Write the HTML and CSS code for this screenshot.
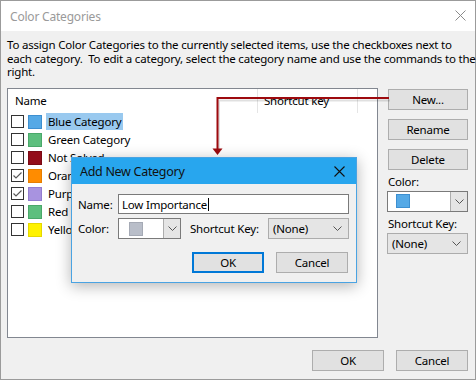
FILE: index.html
```html
<!DOCTYPE html>
<html>
<head>
<meta charset="utf-8">
<link rel="stylesheet" href="styles.css">
</head>
<body>
<div class="window">
  <div class="titlebar">
    <span class="title">Color Categories</span>
    <svg class="close" width="11" height="11" viewBox="0 0 11 11"><path d="M0.5 0.5 L10.5 10.5 M10.5 0.5 L0.5 10.5" stroke="#8a8a8a" stroke-width="1" fill="none"/></svg>
  </div>
  <div class="body">
    <p class="intro">To assign Color Categories to the currently selected items, use the checkboxes next to<br>each category.&nbsp; To edit a category, select the category name and use the commands to the<br>right.</p>
    <div class="main">
      <div class="listbox">
        <div class="lb-header">
          <div class="col-name">Name</div>
          <div class="col-key">Shortcut key</div>
        </div>
        <ul class="rows">
          <li class="row"><span class="cb"></span><span class="sw sw-blue"></span><span class="lbl sel">Blue Category</span></li>
          <li class="row"><span class="cb"></span><span class="sw sw-green"></span><span class="lbl">Green Category</span></li>
          <li class="row"><span class="cb"></span><span class="sw sw-dred"></span><span class="lbl">Not Solved</span></li>
          <li class="row"><span class="cb"><svg width="11" height="11" viewBox="0 0 11 11"><path d="M1.5 5.5 L4 8 L9.5 2.5" stroke="#5a5a5a" stroke-width="1.2" fill="none"/></svg></span><span class="sw sw-orange"></span><span class="lbl">Orange Category</span></li>
          <li class="row"><span class="cb"><svg width="11" height="11" viewBox="0 0 11 11"><path d="M1.5 5.5 L4 8 L9.5 2.5" stroke="#5a5a5a" stroke-width="1.2" fill="none"/></svg></span><span class="sw sw-purple"></span><span class="lbl">Purple Category</span></li>
          <li class="row"><span class="cb"></span><span class="sw sw-green"></span><span class="lbl">Red Category</span></li>
          <li class="row"><span class="cb"></span><span class="sw sw-yellow"></span><span class="lbl">Yellow Category</span></li>
        </ul>
      </div>
      <div class="side">
        <button class="btn">New...</button>
        <button class="btn">Rename</button>
        <button class="btn">Delete</button>
        <div class="side-label">Color:</div>
        <div class="combo combo-edit">
          <span class="combo-val"><span class="sw sw-blue sw-combo"></span></span>
          <span class="combo-arrow"><svg width="9" height="5" viewBox="0 0 9 5"><path d="M0.5 0.5 L4.5 4.5 L8.5 0.5" stroke="#555" fill="none"/></svg></span>
        </div>
        <div class="side-label">Shortcut Key:</div>
        <div class="combo combo-list">
          <span class="combo-text">(None)</span>
          <svg width="9" height="5" viewBox="0 0 9 5"><path d="M0.5 0.5 L4.5 4.5 L8.5 0.5" stroke="#555" fill="none"/></svg>
        </div>
      </div>
    </div>
    <div class="footer">
      <button class="btn btn-foot">OK</button>
      <button class="btn btn-foot">Cancel</button>
    </div>
  </div>

  <svg class="arrow" width="476" height="170" viewBox="0 0 476 170">
    <path d="M389 99 L218 99 L218 150" stroke="rgba(0,0,0,0.12)" stroke-width="2" fill="none" transform="translate(1,1.5)"/>
    <path d="M389 98 L217.5 98 L217.5 149" stroke="#9d0a0e" stroke-width="2" fill="none"/>
    <polygon points="212.5,148.5 222.5,148.5 217.5,155" fill="#9d0a0e"/>
  </svg>

  <div class="dialog">
    <div class="dlg-title">
      <span>Add New Category</span>
      <svg width="11" height="11" viewBox="0 0 11 11"><path d="M0.5 0.5 L10.5 10.5 M10.5 0.5 L0.5 10.5" stroke="#111" stroke-width="1.1" fill="none"/></svg>
    </div>
    <div class="dlg-body">
      <div class="dlg-row">
        <span class="dlg-label">Name:</span>
        <span class="textbox">Low Importance<span class="caret"></span></span>
      </div>
      <div class="dlg-row dlg-row2">
        <span class="dlg-label">Color:</span>
        <div class="combo combo-edit combo-small">
          <span class="combo-val"><span class="sw sw-gray sw-combo"></span></span>
          <span class="combo-arrow"><svg width="9" height="5" viewBox="0 0 9 5"><path d="M0.5 0.5 L4.5 4.5 L8.5 0.5" stroke="#555" fill="none"/></svg></span>
        </div>
        <span class="dlg-key">Shortcut Key:</span>
        <div class="combo combo-list combo-key">
          <span class="combo-text">(None)</span>
          <svg width="9" height="5" viewBox="0 0 9 5"><path d="M0.5 0.5 L4.5 4.5 L8.5 0.5" stroke="#555" fill="none"/></svg>
        </div>
      </div>
      <div class="dlg-buttons">
        <button class="btn btn-foot btn-default">OK</button>
        <button class="btn btn-foot">Cancel</button>
      </div>
    </div>
  </div>
</div>
</body>
</html>
```

FILE: styles.css
```css
* { box-sizing: border-box; }
html, body { margin: 0; padding: 0; background: #f0f0f0; }

.window {
  position: relative;
  width: 476px;
  height: 380px;
  border: 1px solid #9b9b9b;
  background: #f0f0f0;
  display: flex;
  flex-direction: column;
  font-family: "Noto Sans", "Open Sans", sans-serif;
  font-size: 11.5px;
  letter-spacing: -0.2px;
  color: #000;
}

.titlebar {
  height: 30px;
  background: #fff;
  display: flex;
  align-items: center;
  justify-content: space-between;
  padding: 0 9px 0 9px;
  flex: none;
}
.title { color: #9a9a9a; font-size: 12px; }
.close { display: block; margin-top: -2px; }

.body {
  flex: 1;
  display: flex;
  flex-direction: column;
  padding: 7px 6px 8px 6px;
}

.intro {
  margin: 0;
  line-height: 13.5px;
  white-space: nowrap;
}

.main {
  display: flex;
  margin-top: 9px;
}

.listbox {
  width: 371px;
  height: 250px;
  background: #fff;
  border: 1px solid #828790;
}

.lb-header {
  display: flex;
  height: 24px;
  align-items: stretch;
}
.col-name {
  width: 250px;
  padding-left: 7px;
  display: flex;
  align-items: center;
  border-right: 1px solid #e5e5e5;
}
.col-key {
  width: 100px;
  padding-left: 6px;
  display: flex;
  align-items: center;
  border-right: 1px solid #e5e5e5;
}

.rows { list-style: none; margin: 0; padding: 0; }
.row {
  height: 18px;
  display: flex;
  align-items: center;
  padding-left: 3px;
}
.cb {
  width: 13px;
  height: 13px;
  border: 1px solid #333;
  background: #fff;
  display: flex;
  align-items: center;
  justify-content: center;
  flex: none;
}
.cb svg { display: block; }
.sw {
  width: 14px;
  height: 14px;
  margin-left: 4px;
  flex: none;
  border: 1px solid rgba(0,0,0,0.15);
}
.sw-blue { background: #55a9e6; border-color: #3d8fd0; }
.sw-green { background: #5dbf7e; border-color: #4aa86a; }
.sw-dred { background: #930d1a; border-color: #7a0a14; }
.sw-orange { background: #ff8c00; border-color: #e67e00; }
.sw-purple { background: #a893e0; border-color: #937dd0; }
.sw-yellow { background: #fff200; border-color: #e5d800; }
.sw-gray { background: #b9bec9; border-color: #a5aab5; }

.lbl {
  margin-left: 4px;
  padding: 0 2px;
  line-height: 17px;
}
.sel { background: #99c9ef; }

.side {
  width: 80px;
  margin-left: 10px;
  margin-top: 1px;
  display: flex;
  flex-direction: column;
}
.btn {
  font: inherit;
  letter-spacing: inherit;
  color: #000;
  width: 80px;
  height: 21px;
  padding: 0;
  background: #e1e1e1;
  border: 1px solid #adadad;
  border-radius: 0;
  line-height: 19px;
  text-align: center;
}
.side .btn + .btn { margin-top: 9px; }
.side-label { line-height: 14px; margin-top: 5px; }
.side-label + .combo { margin-top: 2px; }

.combo {
  height: 21px;
  display: flex;
  align-items: center;
}
.combo-edit {
  background: #fff;
  border: 1px solid #7a7a7a;
}
.combo-val {
  flex: 1;
  display: flex;
  align-items: center;
  padding-left: 8px;
}
.sw-combo { margin-left: 0; }
.combo-arrow {
  width: 17px;
  height: 100%;
  background: #e5e5e5;
  border-left: 1px solid #adadad;
  display: flex;
  align-items: center;
  justify-content: center;
}
.combo-list {
  background: #e5e5e5;
  border: 1px solid #acacac;
  padding: 0 6px 0 4px;
  justify-content: space-between;
}
.side .combo { width: 81px; margin-left: -1px; }

.footer {
  margin-top: auto;
  display: flex;
  justify-content: flex-end;
  gap: 12px;
  padding-right: 1px;
}
.btn-foot { width: 72px; }

.arrow {
  position: absolute;
  left: -1px;
  top: -1px;
  pointer-events: none;
}

.dialog {
  position: absolute;
  left: 70px;
  top: 156px;
  width: 286px;
  height: 126px;
  border: 1px solid #4aa3e2;
  background: #f0f0f0;
  box-shadow: 0 3px 14px rgba(0,0,0,0.3);
  display: flex;
  flex-direction: column;
}
.dlg-title {
  height: 26px;
  background: #28a6ee;
  display: flex;
  align-items: center;
  justify-content: space-between;
  padding: 0 11px 0 8px;
  font-size: 12.5px;
  letter-spacing: -0.3px;
  color: #111;
  flex: none;
}
.dlg-body {
  padding: 10px 7px 0 6px;
  display: flex;
  flex-direction: column;
}
.dlg-row {
  display: flex;
  align-items: center;
}
.dlg-row2 { margin-top: 4px; }
.dlg-label { width: 40px; flex: none; }
.textbox {
  flex: 1;
  height: 20px;
  background: #fff;
  border: 1px solid #7a7a7a;
  padding-left: 3px;
  display: flex;
  align-items: center;
}
.caret {
  display: inline-block;
  width: 1px;
  height: 13px;
  background: #000;
  margin-left: 1px;
}
.combo-small { width: 63px; }
.combo-small .combo-val { padding-left: 10px; }
.dlg-key { margin-left: 9px; }
.combo-key { width: 81px; margin-left: auto; }

.dlg-buttons {
  margin-top: 13px;
  display: flex;
  justify-content: flex-end;
  gap: 12px;
  padding-right: 1px;
}
.btn-default {
  border: 2px solid #0078d7;
  line-height: 17px;
}
```
